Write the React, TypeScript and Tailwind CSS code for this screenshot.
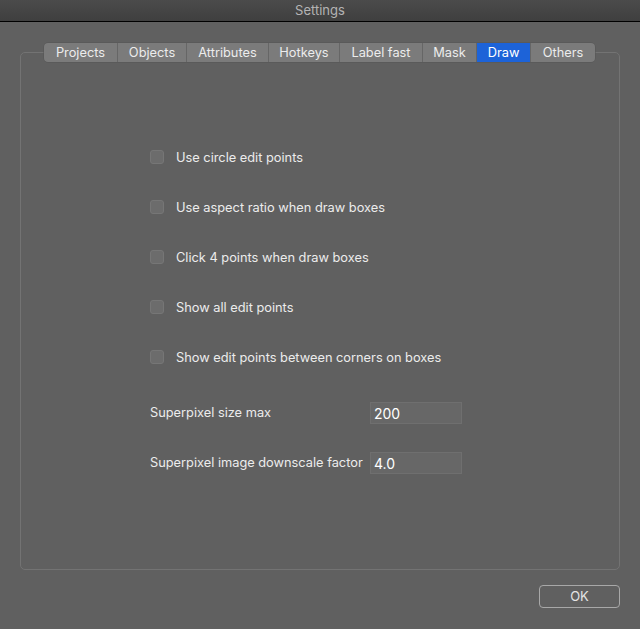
import React, { useState } from "react"

const tabs = [
    { name: "Projects", w: "w-[73px]" },
    { name: "Objects", w: "w-[69px]" },
    { name: "Attributes", w: "w-[82px]" },
    { name: "Hotkeys", w: "w-[71px]" },
    { name: "Label fast", w: "w-[83px]" },
    { name: "Mask", w: "w-[54px]" },
    { name: "Draw", w: "w-[54px]" },
    { name: "Others", w: "w-[65px]" },
]

const options = [
    "Use circle edit points",
    "Use aspect ratio when draw boxes",
    "Click 4 points when draw boxes",
    "Show all edit points",
    "Show edit points between corners on boxes",
]

export default function App() {
    const [active, setActive] = useState("Draw")
    const [checked, setChecked] = useState<boolean[]>(options.map(() => false))
    const [sizeMax, setSizeMax] = useState("200")
    const [factor, setFactor] = useState("4.0")

    function toggle(index: number) {
        setChecked(checked.map((v, i) => (i === index ? !v : v)))
    }

    return (
        <div className="w-[640px] h-[629px] bg-[#606060] flex flex-col font-['Inter','Liberation_Sans',Arial,sans-serif] text-[12.8px] overflow-hidden">
            <div className="h-[22px] shrink-0 bg-gradient-to-b from-[#4b4b4b] to-[#3f3f3f] border-b border-black flex items-center justify-center text-[#b4b4b4] text-[13px]">
                Settings
            </div>

            <div className="flex-1 flex flex-col px-[20px] pt-[21px]">
                <div className="relative h-[518px] mt-[9px] border border-[#737373] rounded-[5px]">
                    <div className="absolute top-[-10px] left-[23px] flex h-[19px] rounded-[4px] overflow-hidden bg-[#7b7b7b] shadow-[0_0_0_0.5px_#555]">
                        {tabs.map((tab, index) => (
                            <button
                                key={tab.name}
                                type="button"
                                onClick={() => setActive(tab.name)}
                                className={`${tab.w} h-full flex items-center justify-center pt-px ${index > 0 ? "border-l border-[#666]" : ""} ${active === tab.name ? "bg-[#1d63d8] text-white" : "text-[#ececec]"}`}
                            >
                                {tab.name}
                            </button>
                        ))}
                    </div>

                    <div className="flex flex-col gap-[36px] pl-[129px] pt-[97px]">
                        {options.map((label, index) => (
                            <label key={label} className="flex items-center gap-[12px] h-[14px] text-[#ececec] cursor-default">
                                <span
                                    onClick={() => toggle(index)}
                                    className={`w-[14px] h-[14px] rounded-[3px] border border-[#767676] flex items-center justify-center text-[10px] leading-none ${checked[index] ? "bg-[#1d63d8] text-white" : "bg-[#6c6c6c]"}`}
                                >
                                    {checked[index] ? "✓" : ""}
                                </span>
                                <span className="pt-[2px]">{label}</span>
                            </label>
                        ))}
                    </div>

                    <div className="flex flex-col gap-[28px] pl-[129px] pt-[38px]">
                        <div className="flex items-center h-[22px]">
                            <span className="w-[220px] text-[#ececec]">Superpixel size max</span>
                            <input
                                value={sizeMax}
                                onChange={(e) => setSizeMax(e.target.value)}
                                className="w-[92px] h-[22px] bg-[#676767] border border-[#6f6f6f] px-[3px] text-white text-[14px] outline-none"
                            />
                        </div>
                        <div className="flex items-center h-[22px]">
                            <span className="w-[220px] text-[#ececec]">Superpixel image downscale factor</span>
                            <input
                                value={factor}
                                onChange={(e) => setFactor(e.target.value)}
                                autoFocus
                                className="w-[92px] h-[22px] bg-[#676767] border border-[#6f6f6f] px-[3px] text-white text-[14px] outline-none caret-white"
                            />
                        </div>
                    </div>
                </div>

                <div className="flex justify-end mt-[15px]">
                    <button
                        type="button"
                        className="w-[81px] h-[23px] rounded-[4px] border border-[#a8a8a8] text-[#e4e4e4] text-[13px] flex items-center justify-center"
                    >
                        OK
                    </button>
                </div>
            </div>
        </div>
    )
}
